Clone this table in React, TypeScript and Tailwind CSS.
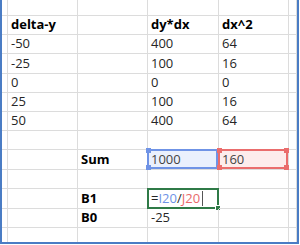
import React from 'react';

type Cell = { text?: React.ReactNode; bold?: boolean; sel?: 'blue' | 'red' | 'edit' };

const rowHeights = ['h-[16px]', 'h-[19px]', 'h-[19px]', 'h-[20px]', 'h-[19px]', 'h-[19px]', 'h-[19px]', 'h-[19px]', 'h-[20px]', 'h-[19px]', 'h-[20px]', 'h-[19px]', 'h-[20px]'];
const colWidths = ['w-[6px]', 'w-[70px]', 'w-[70px]', 'w-[71px]', 'w-[70px]', 'flex-1'];

const formula = (
  <span className="flex items-center">
    <span>=</span>
    <span className="text-[#6f93e6]">I20</span>
    <span>/</span>
    <span className="text-[#e86a6a]">J20</span>
    <span className="ml-[2px] inline-block h-[15px] w-px bg-[#555]" />
  </span>
);

const rows: Cell[][] = [
  [],
  [{}, { text: 'delta-y', bold: true }, {}, { text: 'dy*dx', bold: true }, { text: 'dx^2', bold: true }],
  [{}, { text: '-50' }, {}, { text: '400' }, { text: '64' }],
  [{}, { text: '-25' }, {}, { text: '100' }, { text: '16' }],
  [{}, { text: '0' }, {}, { text: '0' }, { text: '0' }],
  [{}, { text: '25' }, {}, { text: '100' }, { text: '16' }],
  [{}, { text: '50' }, {}, { text: '400' }, { text: '64' }],
  [],
  [{}, {}, { text: 'Sum', bold: true }, { text: '1000', sel: 'blue' }, { text: '160', sel: 'red' }],
  [],
  [{}, {}, { text: 'B1', bold: true }, { text: formula, sel: 'edit' }],
  [{}, {}, { text: 'B0', bold: true }, { text: '-25' }],
  [],
];

function Handle({ pos, color }: { pos: string; color: string }) {
  return <span className={`absolute h-[5px] w-[5px] ${pos} ${color}`} />;
}

function Overlay({ sel }: { sel: 'blue' | 'red' | 'edit' }) {
  if (sel === 'blue') {
    return (
      <div className="absolute -left-px -top-px bottom-0 right-0 border-2 border-[#6f93e6]">
        <Handle pos="-left-[3px] -top-[3px]" color="bg-[#6f93e6]" />
        <Handle pos="-left-[3px] -bottom-[3px]" color="bg-[#6f93e6]" />
      </div>
    );
  }
  if (sel === 'red') {
    return (
      <div className="absolute -left-px -top-px bottom-0 right-0 border-2 border-[#ea6d6d]">
        <Handle pos="-left-[3px] -top-[3px]" color="bg-[#ea6d6d]" />
        <Handle pos="-left-[3px] -bottom-[3px]" color="bg-[#ea6d6d]" />
        <Handle pos="-right-[3px] -top-[3px]" color="bg-[#ea6d6d]" />
        <Handle pos="-right-[3px] -bottom-[3px]" color="bg-[#ea6d6d]" />
      </div>
    );
  }
  return (
    <div className="absolute -left-px -top-px -bottom-px -right-px border-2 border-[#2f7a47]">
      <span className="absolute -bottom-[3px] -right-[3px] h-[4px] w-[4px] bg-[#2f7a47] outline outline-1 outline-white" />
    </div>
  );
}

export default function App() {
  return (
    <div className="h-[245px] w-[300px] bg-white" style={{ fontFamily: '"Open Sans", "Liberation Sans", sans-serif' }}>
      <div className="flex h-[244px] w-[299px] flex-col overflow-hidden border-x-2 border-b-2 border-[#4a7cc4] text-[13px] text-[#262626]">
        {rows.map((row, r) => (
          <div key={r} className={`flex shrink-0 ${rowHeights[r]}`}>
            {colWidths.map((w, c) => {
              const cell = row[c] || {};
              const bg = cell.sel === 'blue' ? 'bg-[#eaf0fd]' : cell.sel === 'red' ? 'bg-[#fdecec]' : '';
              return (
                <div
                  key={c}
                  className={`relative flex shrink-0 items-center border-b border-r border-[#dcdcdc] pl-[3px] ${w} ${bg} ${cell.bold ? 'font-bold text-black' : ''} ${cell.sel === 'blue' || cell.sel === 'red' ? 'text-[#444]' : ''}`}
                >
                  {cell.text}
                  {cell.sel && <Overlay sel={cell.sel} />}
                </div>
              );
            })}
          </div>
        ))}
      </div>
    </div>
  );
}
